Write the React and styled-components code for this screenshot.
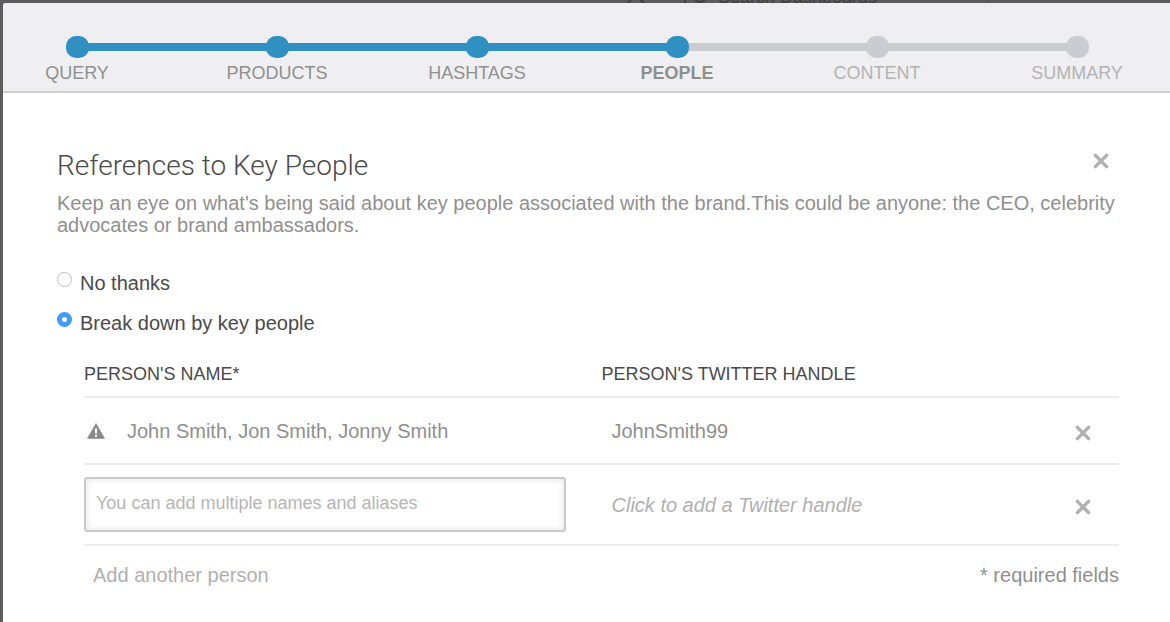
import React, { useState } from "react";
import styled, { createGlobalStyle } from "styled-components";

const GlobalStyle = createGlobalStyle`
  *, *::before, *::after { box-sizing: border-box; }
  body {
    margin: 0;
    background: #5c5c5c;
    font-family: "Liberation Sans", Arial, Helvetica, sans-serif;
    font-size: 20px;
    line-height: 22px;
    color: #4a4a4a;
  }
`;

const Page = styled.div`
  display: flex;
  flex-direction: column;
  min-height: 100vh;
  padding-left: 3px;
`;

const Backdrop = styled.div`
  display: flex;
  justify-content: flex-end;
  align-items: flex-end;
  gap: 8px;
  height: 3px;
  padding-right: 182px;
  overflow: hidden;
  color: #3e3e3e;
  font-size: 18px;
  line-height: 12px;
`;

const BackdropField = styled.span`
  display: flex;
  align-items: flex-end;
  gap: 8px;
  padding-right: 110px;
  border-right: 1px solid #4e4e4e;
`;

const Dialog = styled.main`
  flex: 1;
  border-top-left-radius: 3px;
  background: #fff;
  overflow: hidden;
`;

const StepsBar = styled.nav`
  padding: 33px 81px 7px 63px;
  border-bottom: 2px solid #cdcdcf;
  background: #efeff1;
`;

const Steps = styled.ol`
  display: flex;
  margin: 0;
  padding: 0;
  list-style: none;
`;

const Step = styled.li`
  flex: ${(p) => (p.$last ? "none" : "1")};
`;

const Track = styled.div`
  display: flex;
  align-items: center;
`;

const Dot = styled.span`
  position: relative;
  z-index: 1;
  width: 23px;
  height: 22px;
  border-radius: 10px;
  background: ${(p) => (p.$done ? "#3090c2" : "#cbccd2")};
`;

const Line = styled.span`
  flex: 1;
  height: 8px;
  margin: 0 -4px;
  background: ${(p) => (p.$done ? "#3090c2" : "#cbccd2")};
`;

const StepLabel = styled.span`
  display: flex;
  justify-content: center;
  width: 22px;
  padding-top: 4px;
  white-space: nowrap;
  text-transform: uppercase;
  font-size: 18px;
  font-weight: ${(p) => (p.$current ? "bold" : "normal")};
  color: ${(p) => (p.$done ? "#8f8f8f" : "#b3b3b3")};
`;

const Content = styled.section`
  padding: 56px 51px 32px 54px;
`;

const TitleRow = styled.header`
  display: flex;
  justify-content: space-between;
  align-items: flex-start;
`;

const Title = styled.h1`
  margin: 0;
  font-family: Roboto, sans-serif;
  font-size: 28px;
  font-weight: 300;
  line-height: 34px;
  color: #4a4a4a;
`;

const IconButton = styled.button`
  display: inline-flex;
  align-items: center;
  justify-content: center;
  width: 36px;
  height: 24px;
  padding: 0;
  border: 0;
  background: none;
  color: #b0b0b0;
  cursor: pointer;
`;

const Intro = styled.p`
  margin: 9px 0 36px;
  color: #8f8f8f;
`;

const Options = styled.fieldset`
  display: flex;
  flex-direction: column;
  gap: 18px;
  margin: 0;
  padding: 0;
  border: 0;
`;

const Option = styled.label`
  display: flex;
  align-items: flex-start;
  gap: 8px;
`;

const Radio = styled.input`
  appearance: none;
  width: 15px;
  height: 15px;
  margin: 0;
  border: 1px solid #bdbdbd;
  border-radius: 50%;
  background: #fff;
  &:checked {
    border: 5px solid #3f9bfd;
  }
`;

const People = styled.div`
  padding: 29px 0 0 27px;
`;

const Table = styled.table`
  width: 100%;
  table-layout: fixed;
  border-collapse: separate;
  border-spacing: 0;
`;

const Row = styled.tr`
  height: ${(p) => p.$height}px;
`;

const HeadCell = styled.th`
  width: ${(p) => p.$width};
  padding: 0 0 11px;
  border-bottom: 2px solid #ececec;
  text-align: left;
  font-size: 18px;
  font-weight: normal;
`;

const Cell = styled.td`
  padding: 0 0 0 ${(p) => p.$indent || 0}px;
  border-bottom: 2px solid #ececec;
  vertical-align: middle;
  color: #8f8f8f;
`;

const RemoveCell = styled(Cell)`
  padding-top: 4px;
  text-align: center;
`;

const PersonName = styled.div`
  display: flex;
  align-items: center;
  gap: 22px;
`;

const NameInput = styled.input`
  display: block;
  width: calc(100% - 36px);
  height: 55px;
  padding: 0 10px 2px;
  border: 2px solid #c9c9c9;
  border-radius: 3px;
  box-shadow: inset 0 0 7px rgba(0, 0, 0, 0.12);
  font: 18px "Liberation Sans", Arial, sans-serif;
  color: #4a4a4a;
  outline: 0;
  &::placeholder { color: #b5b5b5; opacity: 1; }
`;

const TextButton = styled.button`
  padding: 0;
  border: 0;
  background: none;
  font: inherit;
  font-style: ${(p) => (p.$italic ? "italic" : "normal")};
  color: #b0b0b0;
  cursor: pointer;
`;

const Footer = styled.footer`
  display: flex;
  justify-content: space-between;
  padding: 18px 0 0 9px;
  color: #8f8f8f;
`;

function Cross() {
  return (
    <svg width="16" height="16" viewBox="0 0 16 16" fill="none" stroke="currentColor" strokeWidth="3.4" strokeLinecap="round" aria-hidden="true">
      <path d="M2.4 2.4 13.6 13.6M13.6 2.4 2.4 13.6" />
    </svg>
  );
}

function Warning() {
  return (
    <svg width="18" height="16" viewBox="0 0 18 16" role="img" aria-label="Warning">
      <path d="M9 .4 17.6 15.6H.4Z" fill="#8a8a8a" stroke="#8a8a8a" strokeWidth=".6" strokeLinejoin="round" />
      <path d="M7.8 5.5h2.4l-.4 5.2H8.2ZM8 11.8h2v2H8Z" fill="#fff" />
    </svg>
  );
}

function BackdropIcons() {
  return (
    <svg width="84" height="14" viewBox="0 0 84 14" fill="none" stroke="currentColor" strokeWidth="2" aria-hidden="true">
      <path d="M2 14 5 11M14 10l4 4M59 0v14" />
      <circle cx="74" cy="7" r="6" />
    </svg>
  );
}

const steps = ["Query", "Products", "Hashtags", "People", "Content", "Summary"];
const current = 3;

export default function App() {
  const [mode, setMode] = useState("people");
  const [name, setName] = useState("");

  return (
    <>
      <GlobalStyle />
      <Page>
        <Backdrop aria-hidden="true">
          <BackdropField>
            <BackdropIcons />
            Search Dashboards
          </BackdropField>
        </Backdrop>
        <Dialog>
          <StepsBar aria-label="Progress">
            <Steps>
              {steps.map((label, i) => (
                <Step key={label} $last={i === steps.length - 1} aria-current={i === current ? "step" : undefined}>
                  <Track>
                    <Dot $done={i <= current} />
                    {i < steps.length - 1 && <Line $done={i < current} />}
                  </Track>
                  <StepLabel $done={i <= current} $current={i === current}>{label}</StepLabel>
                </Step>
              ))}
            </Steps>
          </StepsBar>
          <Content>
            <TitleRow>
              <Title>References to Key People</Title>
              <IconButton type="button" aria-label="Close"><Cross /></IconButton>
            </TitleRow>
            <Intro>
              Keep an eye on what's being said about key people associated with the brand.This could be anyone: the CEO, celebrity advocates or brand ambassadors.
            </Intro>
            <Options aria-label="Key people">
              <Option>
                <Radio type="radio" name="mode" checked={mode === "none"} onChange={() => setMode("none")} />
                No thanks
              </Option>
              <Option>
                <Radio type="radio" name="mode" checked={mode === "people"} onChange={() => setMode("people")} />
                Break down by key people
              </Option>
            </Options>
            <People>
              <Table>
                <thead>
                  <tr>
                    <HeadCell scope="col" $width="50%">PERSON'S NAME*</HeadCell>
                    <HeadCell scope="col">PERSON'S TWITTER HANDLE</HeadCell>
                    <HeadCell $width="72px" aria-label="Remove" />
                  </tr>
                </thead>
                <tbody>
                  <Row $height={67}>
                    <Cell $indent={3}>
                      <PersonName><Warning />John Smith, Jon Smith, Jonny Smith</PersonName>
                    </Cell>
                    <Cell $indent={10}>JohnSmith99</Cell>
                    <RemoveCell>
                      <IconButton type="button" aria-label="Remove John Smith"><Cross /></IconButton>
                    </RemoveCell>
                  </Row>
                  <Row $height={81}>
                    <Cell>
                      <NameInput
                        type="text"
                        aria-label="Person's name"
                        placeholder="You can add multiple names and aliases"
                        value={name}
                        onChange={(e) => setName(e.target.value)}
                      />
                    </Cell>
                    <Cell $indent={10}><TextButton type="button" $italic>Click to add a Twitter handle</TextButton></Cell>
                    <RemoveCell>
                      <IconButton type="button" aria-label="Remove new person"><Cross /></IconButton>
                    </RemoveCell>
                  </Row>
                </tbody>
              </Table>
              <Footer>
                <TextButton type="button">Add another person</TextButton>
                <span>* required fields</span>
              </Footer>
            </People>
          </Content>
        </Dialog>
      </Page>
    </>
  );
}
